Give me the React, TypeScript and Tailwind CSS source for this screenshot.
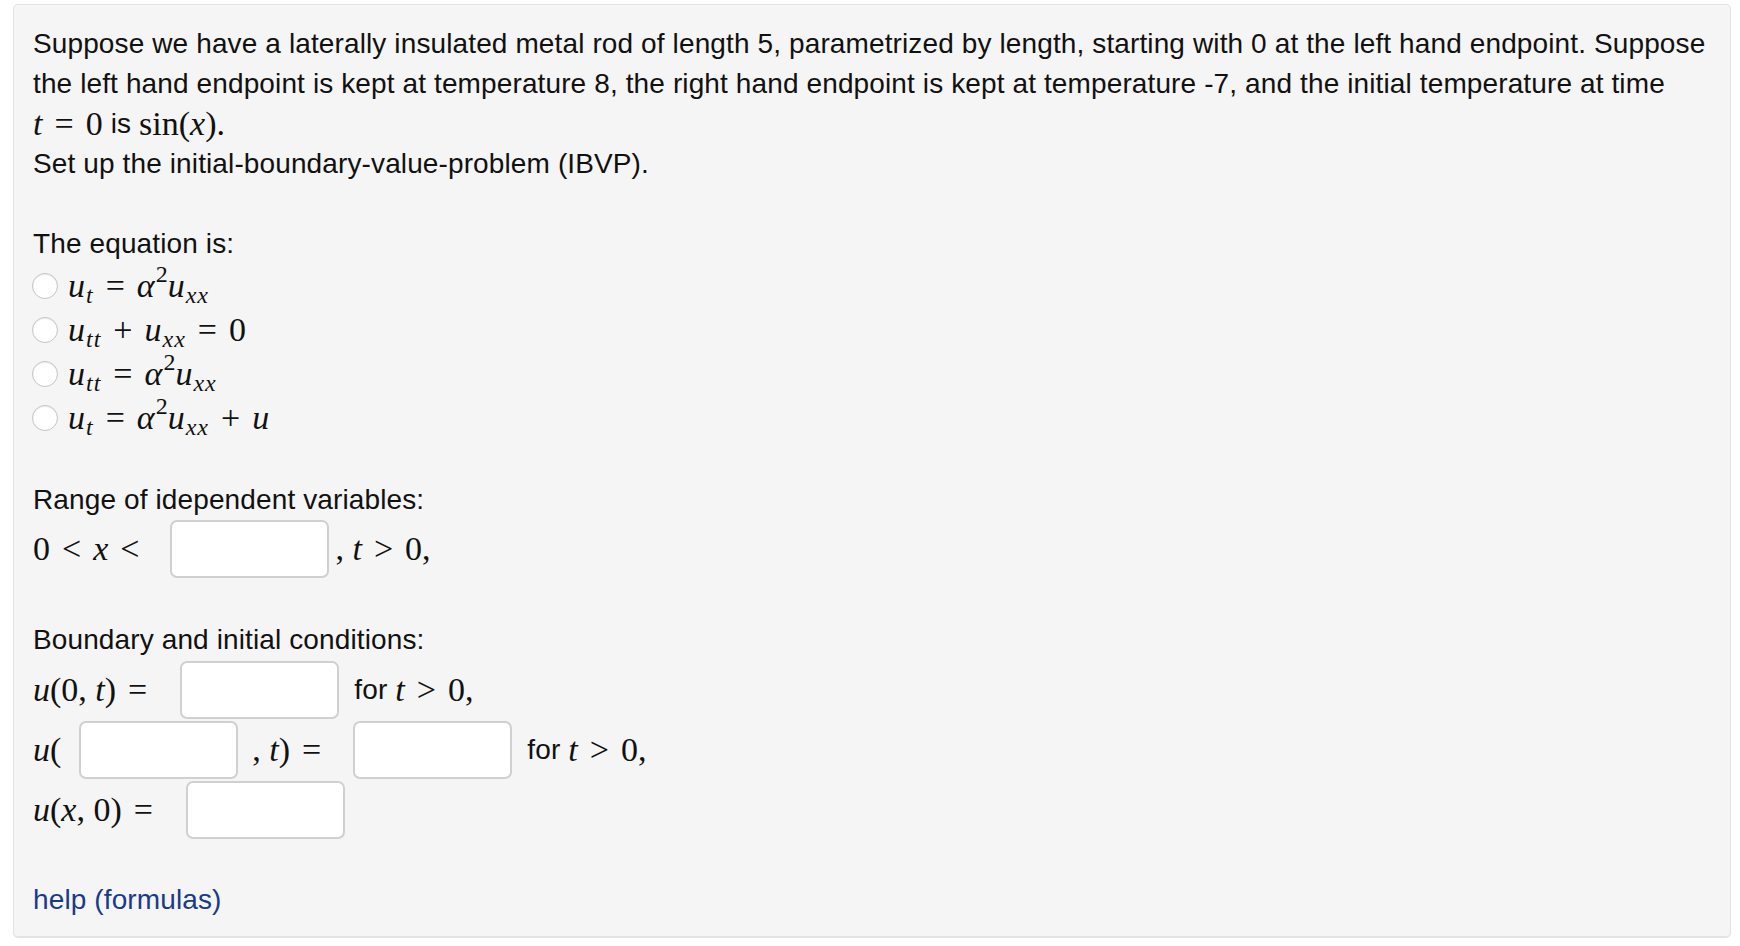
import React from 'react';

// math pieces, Times-like serif in place of the TeX font
const M: React.FC<{ children: React.ReactNode; className?: string }> = ({ children, className = '' }) => (
  <span className={`font-['Liberation_Serif','DejaVu_Serif',serif] text-[34px] leading-none tracking-normal whitespace-nowrap ${className}`}>
    {children}
  </span>
);

const V: React.FC<{ children: React.ReactNode }> = ({ children }) => <i className="italic">{children}</i>;

const Sub: React.FC<{ children: React.ReactNode }> = ({ children }) => (
  <sub className="italic text-[24px] relative top-[6px] align-baseline ml-[1px] tracking-[1px]">{children}</sub>
);

const Sup: React.FC<{ children: React.ReactNode }> = ({ children }) => (
  <sup className="text-[24px] relative -top-[15px] align-baseline ml-[1px]">{children}</sup>
);

// relation / binary operator with thick spacing
const Rel: React.FC<{ children: React.ReactNode }> = ({ children }) => <span className="mx-[12px]">{children}</span>;

const Radio: React.FC = () => (
  <span className="inline-block w-[26px] h-[26px] rounded-full bg-white border border-[#c4c4c4] shadow-[inset_0_1px_1px_rgba(0,0,0,0.08)] shrink-0" />
);

const AnswerBox: React.FC<{ className?: string }> = ({ className = '' }) => (
  <input
    type="text"
    className={`w-[159px] h-[58px] bg-white border-2 border-[#d0d0d0] rounded-[7px] outline-none shrink-0 ${className}`}
  />
);

const options: React.ReactNode[] = [
  <>
    <V>u</V><Sub>t</Sub><Rel>=</Rel><V>α</V><Sup>2</Sup><V>u</V><Sub>xx</Sub>
  </>,
  <>
    <V>u</V><Sub>tt</Sub><Rel>+</Rel><V>u</V><Sub>xx</Sub><Rel>=</Rel>0
  </>,
  <>
    <V>u</V><Sub>tt</Sub><Rel>=</Rel><V>α</V><Sup>2</Sup><V>u</V><Sub>xx</Sub>
  </>,
  <>
    <V>u</V><Sub>t</Sub><Rel>=</Rel><V>α</V><Sup>2</Sup><V>u</V><Sub>xx</Sub><Rel>+</Rel><V>u</V>
  </>,
];

export default function App() {
  return (
    <div className="min-h-screen bg-white pt-[4px] pl-[13px] font-['Liberation_Sans','Helvetica',sans-serif] text-[28px] leading-[40px] tracking-[0.12px] text-[#111]">
      <div className="w-[1718px] h-[934px] bg-[#f5f5f5] border border-[#e3e3e3] border-b-2 rounded-[5px] pt-[19px] px-[19px]">
        {/* problem statement */}
        <div className="whitespace-nowrap">
          <div>Suppose we have a laterally insulated metal rod of length 5, parametrized by length, starting with 0 at the left hand endpoint. Suppose</div>
          <div>the left hand endpoint is kept at temperature 8, the right hand endpoint is kept at temperature -7, and the initial temperature at time</div>
          <div className="flex items-center h-[40px]">
            <M><V>t</V><Rel>=</Rel>0</M>
            <span className="mx-[8px]">is</span>
            <M>sin(<V>x</V>).</M>
          </div>
          <div>Set up the initial-boundary-value-problem (IBVP).</div>
        </div>

        <div className="h-[40px]" />

        <div>The equation is:</div>
        <div className="flex flex-col">
          {options.map((opt, i) => (
            <label key={i} className="flex items-center h-[44px] gap-[10px] -ml-[1px]">
              <Radio />
              <M>{opt}</M>
            </label>
          ))}
        </div>

        <div className="h-[40px]" />

        <div>Range of idependent variables:</div>
        <div className="flex items-center h-[58px]">
          <M>0<Rel>&lt;</Rel><V>x</V><Rel>&lt;</Rel></M>
          <AnswerBox className="ml-[19px]" />
          <M className="ml-[6px]">, <V>t</V><Rel>&gt;</Rel>0,</M>
        </div>

        <div className="h-[42px]" />

        <div>Boundary and initial conditions:</div>
        <div className="flex items-center h-[60px]">
          <M><V>u</V>(0, <V>t</V>)<Rel>=</Rel></M>
          <AnswerBox className="ml-[21px]" />
          <span className="ml-[15px]">for </span>
          <M className="ml-[8px]"><V>t</V><Rel>&gt;</Rel>0,</M>
        </div>
        <div className="flex items-center h-[60px]">
          <M><V>u</V>(</M>
          <AnswerBox className="ml-[18px]" />
          <M className="ml-[14px]">, <V>t</V>)<Rel>=</Rel></M>
          <AnswerBox className="ml-[20px]" />
          <span className="ml-[15px]">for </span>
          <M className="ml-[8px]"><V>t</V><Rel>&gt;</Rel>0,</M>
        </div>
        <div className="flex items-center h-[60px]">
          <M><V>u</V>(<V>x</V>, 0)<Rel>=</Rel></M>
          <AnswerBox className="ml-[21px]" />
        </div>

        <div className="h-[40px]" />

        <a href="#" className="text-[#1a3a8c]">help (formulas)</a>
      </div>
    </div>
  );
}
